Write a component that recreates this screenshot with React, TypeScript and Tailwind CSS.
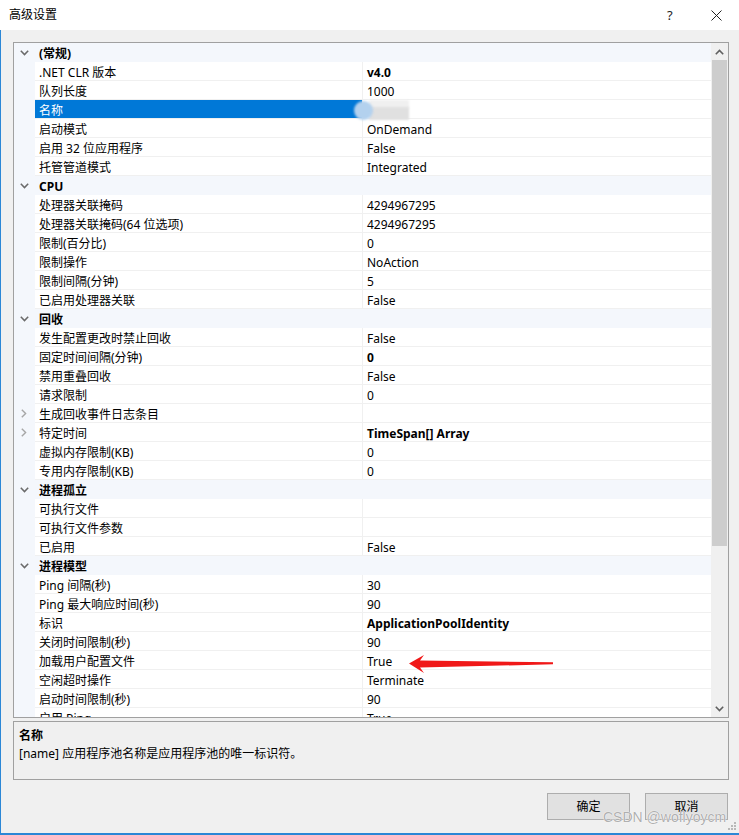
import React from "react";

type Row =
  | { kind: "cat"; label: string }
  | { kind: "item"; label: string; value?: string; bold?: boolean; collapsed?: boolean; selected?: boolean; blurred?: boolean };

const rows: Row[] = [
  { kind: "cat", label: "(常规)" },
  { kind: "item", label: ".NET CLR 版本", value: "v4.0", bold: true },
  { kind: "item", label: "队列长度", value: "1000" },
  { kind: "item", label: "名称", value: "", selected: true, blurred: true },
  { kind: "item", label: "启动模式", value: "OnDemand" },
  { kind: "item", label: "启用 32 位应用程序", value: "False" },
  { kind: "item", label: "托管管道模式", value: "Integrated" },
  { kind: "cat", label: "CPU" },
  { kind: "item", label: "处理器关联掩码", value: "4294967295" },
  { kind: "item", label: "处理器关联掩码(64 位选项)", value: "4294967295" },
  { kind: "item", label: "限制(百分比)", value: "0" },
  { kind: "item", label: "限制操作", value: "NoAction" },
  { kind: "item", label: "限制间隔(分钟)", value: "5" },
  { kind: "item", label: "已启用处理器关联", value: "False" },
  { kind: "cat", label: "回收" },
  { kind: "item", label: "发生配置更改时禁止回收", value: "False" },
  { kind: "item", label: "固定时间间隔(分钟)", value: "0", bold: true },
  { kind: "item", label: "禁用重叠回收", value: "False" },
  { kind: "item", label: "请求限制", value: "0" },
  { kind: "item", label: "生成回收事件日志条目", value: "", collapsed: true },
  { kind: "item", label: "特定时间", value: "TimeSpan[] Array", bold: true, collapsed: true },
  { kind: "item", label: "虚拟内存限制(KB)", value: "0" },
  { kind: "item", label: "专用内存限制(KB)", value: "0" },
  { kind: "cat", label: "进程孤立" },
  { kind: "item", label: "可执行文件", value: "" },
  { kind: "item", label: "可执行文件参数", value: "" },
  { kind: "item", label: "已启用", value: "False" },
  { kind: "cat", label: "进程模型" },
  { kind: "item", label: "Ping 间隔(秒)", value: "30" },
  { kind: "item", label: "Ping 最大响应时间(秒)", value: "90" },
  { kind: "item", label: "标识", value: "ApplicationPoolIdentity", bold: true },
  { kind: "item", label: "关闭时间限制(秒)", value: "90" },
  { kind: "item", label: "加载用户配置文件", value: "True" },
  { kind: "item", label: "空闲超时操作", value: "Terminate" },
  { kind: "item", label: "启动时间限制(秒)", value: "90" },
  { kind: "item", label: "启用 Ping", value: "True" },
];

const ChevronDown = () => (
  <svg width="9" height="6" viewBox="0 0 9 6">
    <path d="M0.8 0.8 L4.5 4.6 L8.2 0.8" fill="none" stroke="#6a6a6a" strokeWidth="1.5" />
  </svg>
);

const ChevronRight = () => (
  <svg width="6" height="9" viewBox="0 0 6 9">
    <path d="M0.8 0.8 L4.6 4.5 L0.8 8.2" fill="none" stroke="#a6a6a6" strokeWidth="1.4" />
  </svg>
);

function GridRow({ row }: { row: Row }) {
  if (row.kind === "cat") {
    return (
      <div className="flex h-[19px] shrink-0 bg-[#f4f7fc]">
        <div className="flex w-[21px] items-center justify-center pr-[1px]">
          <ChevronDown />
        </div>
        <div className="pl-[4px] pt-[3px] text-[12px] font-bold leading-[16px] text-black">{row.label}</div>
      </div>
    );
  }
  return (
    <div className="flex h-[19px] shrink-0">
      <div className="flex w-[21px] items-center justify-center bg-[#f4f7fc] pr-[1px]">
        {row.collapsed ? <ChevronRight /> : null}
      </div>
      <div
        className={
          row.selected
            ? "w-[328px] border-r border-b border-[#f0f0f0] bg-[#0078d7] pl-[4px] pt-[3px] text-[12px] leading-[15px] text-white"
            : "w-[328px] border-r border-b border-[#f0f0f0] bg-white pl-[4px] pt-[3px] text-[12px] leading-[15px] text-black"
        }
      >
        {row.label}
      </div>
      <div
        className={
          row.bold
            ? "flex-1 border-b border-[#f0f0f0] bg-white pl-[4px] pt-[3px] text-[12px] font-bold leading-[15px] text-black"
            : "flex-1 border-b border-[#f0f0f0] bg-white pl-[4px] pt-[3px] text-[12px] leading-[15px] text-black"
        }
      >
        {row.value}
      </div>
    </div>
  );
}

export default function App() {
  return (
    <div
      className="relative h-[835px] w-[739px] overflow-hidden bg-[#f0f0f0] text-black"
      style={{ fontFamily: '"Noto Sans", "Noto Sans CJK SC", sans-serif' }}
    >
      {/* Title bar */}
      <div className="flex h-[30px] items-center bg-white">
        <div className="pl-[9px] text-[12px] leading-[16px] text-black">高级设置</div>
        <div className="flex-1" />
        <div className="w-[18px] text-[13px] leading-[16px] text-[#222]">?</div>
        <div className="ml-[25px] mr-[17px] flex h-[12px] w-[12px] items-center justify-center">
          <svg width="11" height="11" viewBox="0 0 11 11">
            <path d="M0.5 0.5 L10.5 10.5 M10.5 0.5 L0.5 10.5" stroke="#222" strokeWidth="1" />
          </svg>
        </div>
      </div>

      {/* Body */}
      <div className="flex h-[805px] flex-col border-l border-b-2 border-[#2b87d6] pt-[12px] pl-[12px] pr-[10px]">
        {/* Property grid */}
        <div className="flex h-[676px] border border-[#a0a0a0] bg-white">
          <div className="flex flex-1 flex-col overflow-hidden">
            {rows.map((r, i) => (
              <GridRow key={i} row={r} />
            ))}
          </div>
          {/* Scrollbar */}
          <div className="flex w-[17px] flex-col bg-[#f0f0f0]">
            <div className="flex h-[17px] items-center justify-center">
              <svg width="9" height="6" viewBox="0 0 9 6">
                <path d="M0.8 5.2 L4.5 1.4 L8.2 5.2" fill="none" stroke="#606060" strokeWidth="1.6" />
              </svg>
            </div>
            <div className="mx-[1px] h-[486px] bg-[#cdcdcd]" />
            <div className="flex-1" />
            <div className="flex h-[17px] items-center justify-center">
              <svg width="9" height="6" viewBox="0 0 9 6">
                <path d="M0.8 0.8 L4.5 4.6 L8.2 0.8" fill="none" stroke="#606060" strokeWidth="1.6" />
              </svg>
            </div>
          </div>
        </div>

        {/* Description */}
        <div className="mt-[3px] h-[59px] border border-[#a0a0a0] bg-[#f0f0f0] pl-[5px] pt-[5px]">
          <div className="text-[12px] font-bold leading-[18px] text-black">名称</div>
          <div className="text-[12px] leading-[18px] text-black">[name] 应用程序池名称是应用程序池的唯一标识符。</div>
        </div>

        {/* Buttons */}
        <div className="mt-[13px] flex justify-end gap-[15px] pr-[1px]">
          <div className="flex h-[27px] w-[83px] items-center justify-center border border-[#adadad] bg-[#e1e1e1] text-[12px] text-black">
            确定
          </div>
          <div className="flex h-[27px] w-[83px] items-center justify-center border border-[#adadad] bg-[#e1e1e1] text-[12px] text-black">
            取消
          </div>
        </div>
      </div>

      {/* Blurred name value */}
      <div className="absolute left-[369px] top-[100px] h-[9px] w-[40px] bg-[#f0f0f0] blur-[1px]" />
      <div className="absolute left-[369px] top-[107px] h-[13px] w-[40px] bg-[#e0e0e0] blur-[1px]" />
      <div className="absolute left-[354px] top-[101px] h-[19px] w-[19px] rounded-full bg-[#b3d1ee] blur-[1px]" />

      {/* Red arrow annotation */}
      <svg className="absolute left-0 top-0" width="739" height="835" viewBox="0 0 739 835">
        <polygon
          points="409,663.5 424,655 420,660.5 553,662.3 553,664.3 420,667.5 424,673"
          fill="#f01818"
        />
      </svg>

      {/* Watermark */}
      <div
        className="absolute left-[603px] top-[808px] text-[14px] leading-[18px] text-[#9a9a9a]/80"
        style={{ fontFamily: '"Liberation Sans", sans-serif', textShadow: "0 0 1px #fff, 0 0 1px #fff" }}
      >
        CSDN @woflyoycm
      </div>

      {/* Resize grip */}
      <svg className="absolute left-[727px] top-[821px]" width="10" height="10" viewBox="0 0 10 10">
        <rect x="7" y="1" width="2" height="2" fill="#b8b8b8" />
        <rect x="4" y="4" width="2" height="2" fill="#b8b8b8" />
        <rect x="7" y="4" width="2" height="2" fill="#b8b8b8" />
        <rect x="1" y="7" width="2" height="2" fill="#b8b8b8" />
        <rect x="4" y="7" width="2" height="2" fill="#b8b8b8" />
        <rect x="7" y="7" width="2" height="2" fill="#b8b8b8" />
      </svg>
    </div>
  );
}
